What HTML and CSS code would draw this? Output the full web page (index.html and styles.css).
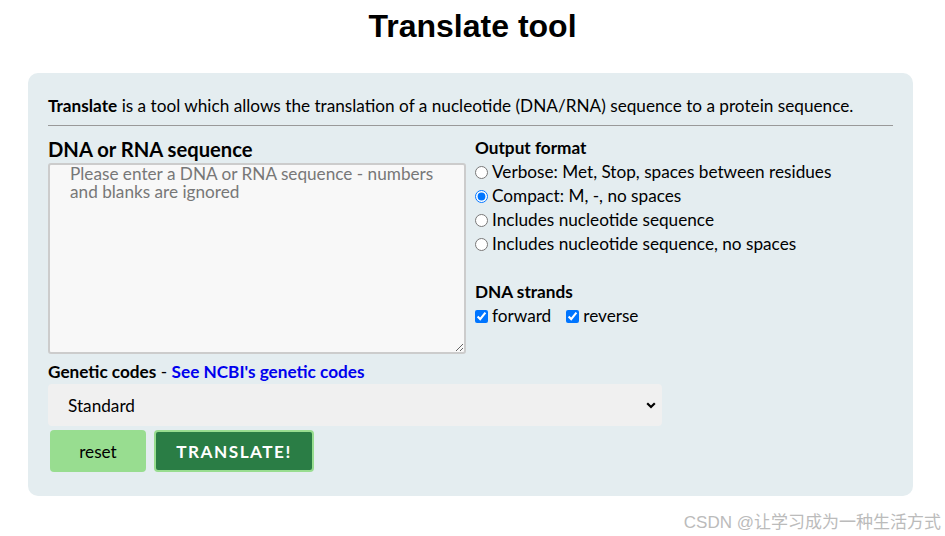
FILE: index.html
```html
<!DOCTYPE html>
<html>
<head>
<meta charset="utf-8">
<link rel="stylesheet" href="styles.css">
</head>
<body>
<h1 class="title">Translate tool</h1>
<div class="card">
  <p class="intro"><b>Translate</b> is a tool which allows the translation of a nucleotide (DNA/RNA) sequence to a protein sequence.</p>
  <hr class="rule">
  <div class="cols">
    <div class="left">
      <h2 class="seq-title">DNA or RNA sequence</h2>
      <textarea class="seq" placeholder="Please enter a DNA or RNA sequence - numbers and blanks are ignored"></textarea>
    </div>
    <div class="right">
      <div class="label">Output format</div>
      <label class="opt"><input type="radio" name="fmt">Verbose: Met, Stop, spaces between residues</label>
      <label class="opt"><input type="radio" name="fmt" checked>Compact: M, -, no spaces</label>
      <label class="opt"><input type="radio" name="fmt">Includes nucleotide sequence</label>
      <label class="opt"><input type="radio" name="fmt">Includes nucleotide sequence, no spaces</label>
      <div class="label strands">DNA strands</div>
      <div class="checks">
        <label class="opt"><input type="checkbox" checked>forward</label>
        <label class="opt"><input type="checkbox" checked>reverse</label>
      </div>
    </div>
  </div>
  <div class="codes"><b>Genetic codes</b> - <a class="link" href="#">See NCBI's genetic codes</a></div>
  <div class="select-wrap">
    <span class="select-text">Standard</span>
    <svg class="chev" width="10" height="7" viewBox="0 0 10 7"><path d="M1.2 1.2 L5 5 L8.8 1.2" fill="none" stroke="#000" stroke-width="2.2"/></svg>
  </div>
  <div class="buttons">
    <button class="btn reset">reset</button>
    <button class="btn go">TRANSLATE!</button>
  </div>
</div>
<div class="watermark">CSDN @让学习成为一种生活方式</div>
</body>
</html>
```
FILE: styles.css
```css
html, body { margin: 0; padding: 0; background: #fff; }
body { font-family: Lato, "Noto Sans", sans-serif; color: #000; }
.title {
  font-family: "Liberation Sans", Arial, sans-serif;
  font-size: 32px; font-weight: bold; text-align: center;
  margin: 0; padding-top: 8px; height: 65px; line-height: 36px;
}
.card {
  margin: 0 32px 0 28px;
  background: #e4edf0;
  border-radius: 10px;
  padding: 21px 20px 24px 20px;
  font-size: 17.2px;
}
.intro { margin: 0; line-height: 24px; }
.rule { border: 0; border-top: 1px solid #999; margin: 7px 0 9px 0; }
.cols { display: flex; gap: 9px; }
.left { width: 418px; }
.seq-title { font-size: 20.2px; margin: 0; line-height: 28px; font-weight: bold; }
.seq {
  display: block; box-sizing: border-box; width: 418px; height: 191px;
  border: 2px solid #ccc; border-radius: 3px; background: #f8f8f8;
  margin: 0; padding: 0 20px; font-family: inherit; font-size: 17.2px; line-height: 18px;
  resize: both;
}
.seq::placeholder { color: #777; }
.right { display: flex; flex-direction: column; padding-top: 1px; }
.label { font-weight: bold; line-height: 24px; }
.strands { margin-top: 24px; }
.opt { display: flex; align-items: center; line-height: 24px; }
.opt input { margin: 0 4px 0 0; width: 13px; height: 13px; }
.checks { display: flex; gap: 15px; }
.codes { margin-top: 6px; line-height: 24px; }
.link { color: #0000ee; text-decoration: none; font-weight: bold; }
.select-wrap {
  display: flex; align-items: center; justify-content: space-between;
  width: 614px; height: 42px; box-sizing: border-box;
  background: #f0f0f0; border-radius: 4px; padding: 0 6px 0 20px;
  margin-top: 0;
}
.chev { display: block; }
.buttons { display: flex; gap: 8px; margin-top: 4px; padding-left: 2px; }
.btn { font-family: inherit; font-size: 17.2px; height: 42px; border-radius: 4px; cursor: pointer; }
.reset { width: 96px; background: #98dd90; border: 0; color: #000; }
.go {
  width: 160px; background: #2a7d45; border: 2px solid #98dd90; color: #fff;
  font-weight: bold; letter-spacing: 1.5px;
}
.watermark {
  text-align: right; padding-right: 4px; margin-top: 12px;
  font-family: "Liberation Sans", "Noto Sans CJK SC", sans-serif; font-size: 17px; color: #bbb;
}
```
